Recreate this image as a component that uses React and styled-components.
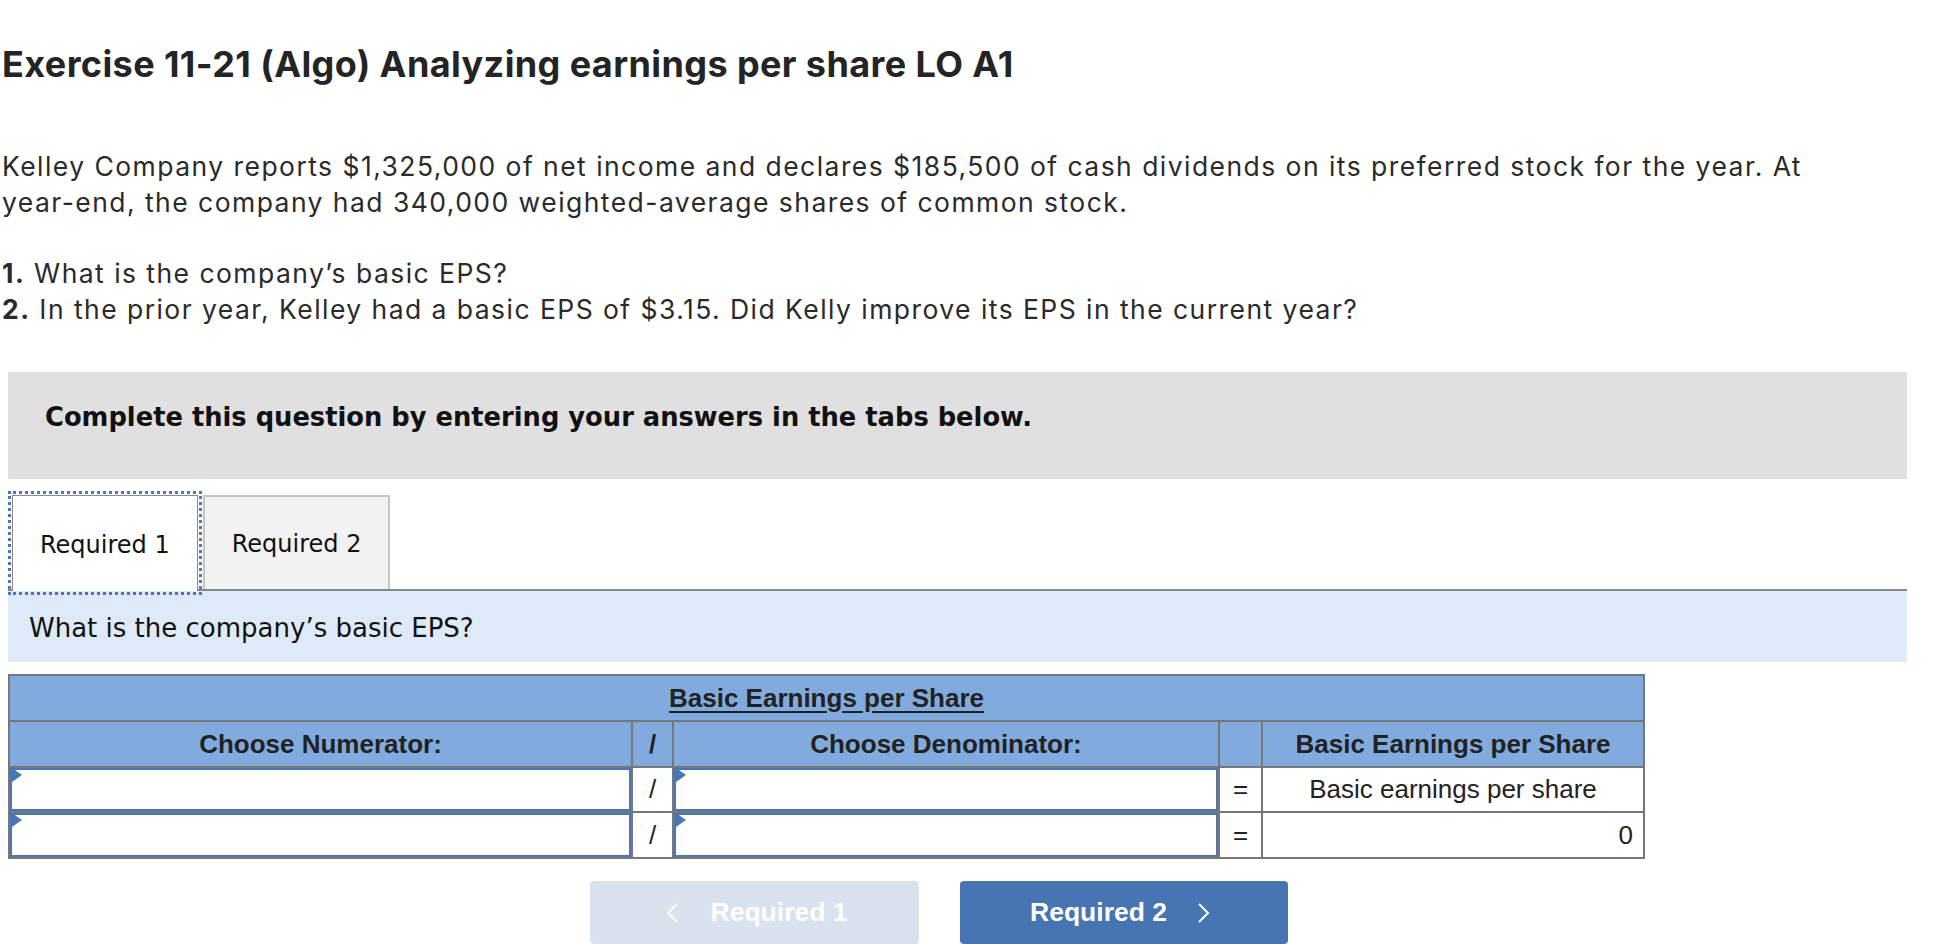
import React from "react";
import styled, { createGlobalStyle } from "styled-components";

const GlobalStyle = createGlobalStyle`
  body {
    margin: 0;
    background: #fff;
    font-family: "DejaVu Sans", Verdana, sans-serif;
  }
`;

const Page = styled.div`
  width: 1946px;
  padding-top: 42px;
`;

const Title = styled.h1`
  margin: 0 0 62px 2px;
  font-family: Inter, Lato, "Liberation Sans", sans-serif;
  font-weight: 700;
  font-size: 36px;
  letter-spacing: 0.4px;
  line-height: 44px;
  color: #242424;
`;

const Para = styled.p`
  margin: 0 0 35px 2px;
  font-family: Inter, Lato, "Liberation Sans", sans-serif;
  font-size: 26.5px;
  letter-spacing: 1.45px;
  line-height: 36px;
  color: #2a2a2a;
`;

const Questions = styled(Para)`
  margin-bottom: 45px;
  b {
    font-weight: 700;
  }
`;

const Instruction = styled.div`
  margin-left: 8px;
  width: 1862px;
  height: 77px;
  padding: 30px 0 0 37px;
  background: #e0e0e0;
  font-weight: 700;
  font-size: 25.75px;
  line-height: 30px;
  color: #111;
`;

const TabStrip = styled.div`
  display: flex;
  align-items: flex-end;
  gap: 5px;
  margin: 12px 0 0 8px;
  padding-left: 4px;
  width: 1895px;
  height: 98px;
  border-bottom: 2px solid #888;
`;

const Tab = styled.div`
  box-sizing: border-box;
  height: ${(p) => (p.$active ? "96px" : "94px")};
  margin-bottom: ${(p) => (p.$active ? "-2px" : "0")};
  padding: 2px 27px 0;
  display: flex;
  align-items: center;
  font-size: 24px;
  color: #111;
  background: ${(p) => (p.$active ? "#fff" : "#f2f2f2")};
  border: ${(p) => (p.$active ? "1px solid #8a8a8a" : "2px solid #c6c6c6")};
  border-bottom: none;
  outline: ${(p) => (p.$active ? "3px dotted #4a78b8" : "none")};
  outline-offset: 1px;
`;

const Prompt = styled.div`
  margin-left: 8px;
  width: 1878px;
  height: 69px;
  padding: 2px 0 0 21px;
  display: flex;
  align-items: center;
  background: #deeaf8;
  font-size: 26px;
  color: #111;
`;

const Grid = styled.table`
  margin: 12px 0 0 8px;
  width: 1635px;
  table-layout: fixed;
  border-collapse: collapse;
  font-family: "Liberation Sans", Arial, sans-serif;
  font-size: 26px;
  color: #222;
`;

const Row = styled.tr`
  height: ${(p) => p.$h}px;
`;

const Head = styled.th`
  background: #81abdf;
  border: 2px solid #777;
  padding: 0;
  font-weight: 700;
  text-align: center;
  text-decoration: ${(p) => (p.$underline ? "underline" : "none")};
  text-underline-offset: 4px;
`;

const Cell = styled.td`
  border: 2px solid #777;
  padding: 0 10px;
  background: #fff;
  text-align: ${(p) => p.$align || "center"};
  font-weight: 400;
`;

const InputCell = styled.td`
  position: relative;
  border: 2px solid #777;
  padding: 0;
  background: #fff;
  box-shadow: inset 0 0 0 2px #4a77b4;

  &::before {
    content: "";
    position: absolute;
    left: 2px;
    top: 0;
    border-left: 10px solid #4a77b4;
    border-top: 7px solid transparent;
    border-bottom: 7px solid transparent;
    height: 0;
    width: 0;
  }
`;

const Nav = styled.div`
  display: flex;
  gap: 41px;
  margin-top: 22px;
  padding-left: 590px;
`;

const NavButton = styled.button`
  display: flex;
  align-items: center;
  justify-content: center;
  gap: ${(p) => (p.$prev ? "32px" : "30px")};
  width: ${(p) => (p.$prev ? "329px" : "328px")};
  height: 63px;
  border: none;
  border-radius: 4px;
  background: ${(p) => (p.$prev ? "#d9e3ef" : "#4675b2")};
  color: #fff;
  font-family: "Liberation Sans", Arial, sans-serif;
  font-weight: 700;
  font-size: 26.5px;
  padding: 0;
  padding-left: ${(p) => (p.$prev ? "4px" : "0")};
  padding-right: ${(p) => (p.$prev ? "0" : "8px")};
`;

const Chevron = ({ dir }) => (
  <svg width="13" height="20" viewBox="0 0 13 20">
    <polyline
      points={dir === "left" ? "11,1 2,10 11,19" : "2,1 11,10 2,19"}
      fill="none"
      stroke="#fff"
      strokeWidth="2"
    />
  </svg>
);

const cols = [623, 41, 546, 43, 382];

export default function App() {
  return (
    <Page>
      <GlobalStyle />
      <Title>Exercise 11-21 (Algo) Analyzing earnings per share LO A1</Title>
      <Para>
        Kelley Company reports $1,325,000 of net income and declares $185,500 of cash dividends on its
        preferred stock for the year. At
        <br />
        year-end, the company had 340,000 weighted-average shares of common stock.
      </Para>
      <Questions>
        <b>1.</b> What is the company’s basic EPS?
        <br />
        <b>2.</b> In the prior year, Kelley had a basic EPS of $3.15. Did Kelly improve its EPS in the current
        year?
      </Questions>
      <Instruction>Complete this question by entering your answers in the tabs below.</Instruction>
      <TabStrip>
        <Tab $active>Required 1</Tab>
        <Tab>Required 2</Tab>
      </TabStrip>
      <Prompt>What is the company’s basic EPS?</Prompt>
      <Grid>
        <colgroup>
          {cols.map((w, i) => (
            <col key={i} style={{ width: w }} />
          ))}
        </colgroup>
        <tbody>
          <Row $h={46}>
            <Head colSpan={5} $underline>
              Basic Earnings per Share
            </Head>
          </Row>
          <Row $h={46}>
            <Head>Choose Numerator:</Head>
            <Head>/</Head>
            <Head>Choose Denominator:</Head>
            <Head></Head>
            <Head>Basic Earnings per Share</Head>
          </Row>
          <Row $h={45}>
            <InputCell />
            <Cell>/</Cell>
            <InputCell />
            <Cell>=</Cell>
            <Cell>Basic earnings per share</Cell>
          </Row>
          <Row $h={46}>
            <InputCell />
            <Cell>/</Cell>
            <InputCell />
            <Cell>=</Cell>
            <Cell $align="right">0</Cell>
          </Row>
        </tbody>
      </Grid>
      <Nav>
        <NavButton $prev>
          <Chevron dir="left" />
          Required 1
        </NavButton>
        <NavButton>
          Required 2
          <Chevron dir="right" />
        </NavButton>
      </Nav>
    </Page>
  );
}
